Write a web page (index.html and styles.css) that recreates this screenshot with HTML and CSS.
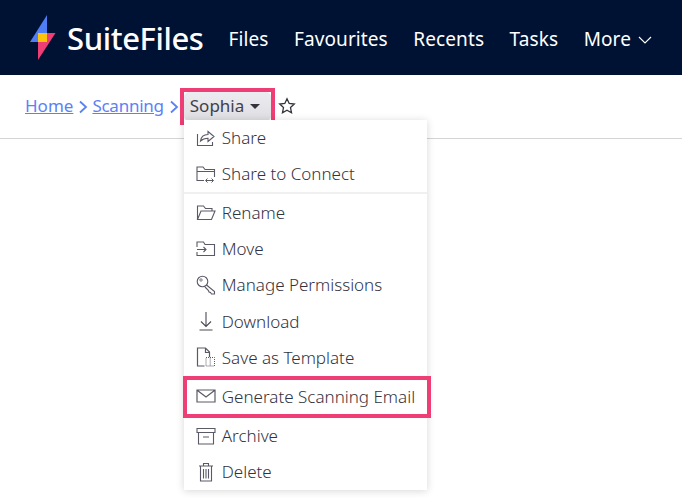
FILE: index.html
```html
<!DOCTYPE html>
<html>
<head>
    <title>SuiteFiles</title>
    <link rel="stylesheet" href="styles.css">
</head>
<body>
    <header class="topbar">
        <a class="brand">
            <svg class="brand-mark" width="26" height="46" viewBox="0 0 26 46">
                <polygon points="17,0 0,27 17,27" fill="#4f7df3"/>
                <polygon points="8,18 25.500,18 8,45" fill="#ef3d75"/>
                <rect x="8" y="18" width="9" height="9" fill="#fcc30b"/>
            </svg>
            <span class="brand-name">SuiteFiles</span>
        </a>
        <nav class="nav">
            <a>Files</a>
            <a>Favourites</a>
            <a>Recents</a>
            <a>Tasks</a>
            <a class="more">More
                <svg width="14" height="8" viewBox="0 0 14 8"><path d="M1 1l6 6 6-6" fill="none" stroke="#fff" stroke-width="1.100"/></svg>
            </a>
        </nav>
    </header>

    <div class="crumbs">
        <a class="crumb">Home</a>
        <svg class="sep" width="10" height="14" viewBox="0 0 10 14"><path d="M2 1.500l6 5.500-6 5.500" fill="none" stroke="#5b82f5" stroke-width="1.800"/></svg>
        <a class="crumb">Scanning</a>
        <svg class="sep" width="10" height="14" viewBox="0 0 10 14"><path d="M2 1.500l6 5.500-6 5.500" fill="none" stroke="#5b82f5" stroke-width="1.800"/></svg>
        <div class="folder">
            <button class="folder-btn">Sophia <span class="caret"></span></button>
            <ul class="menu">
                <li>
                    <svg viewBox="0 0 20 18"><path d="M1.500 5v11.500h15V13M4.500 12c.5-4 3.500-6.500 7.500-6.500V2.500l6 5-6 5V9.300c-3 0-5.500 .7-7.500 2.700z" fill="none" stroke="#5a5a66" stroke-width="1.100"/></svg>
                    Share
                </li>
                <li>
                    <svg viewBox="0 0 20 18"><path d="M8 15.500H1V2h6l2 2.500h9.500V12M18.500 6.500H1" fill="none" stroke="#5a5a66" stroke-width="1.100"/><path d="M10 15.500h7M11.500 13.500l-2 2 2 2M15.500 13.500l2 2-2 2" fill="none" stroke="#5a5a66"/></svg>
                    Share to Connect
                </li>
                <li class="divider"></li>
                <li>
                    <svg viewBox="0 0 20 18"><path d="M1.500 15.500V2h6l2 2.500h6.500V7M1.500 15.500L5 7h14l-3.500 8.500z" fill="none" stroke="#5a5a66" stroke-width="1.100"/></svg>
                    Rename
                </li>
                <li>
                    <svg viewBox="0 0 20 18"><path d="M1 7V2h6.500l1.500 2.500h9.500v11H1V12" fill="none" stroke="#5a5a66" stroke-width="1.100"/><path d="M1 9.500h9M7.500 7l2.500 2.500L7.500 12" fill="none" stroke="#5a5a66" stroke-width="1.100"/></svg>
                    Move
                </li>
                <li>
                    <svg viewBox="0 0 20 20"><circle cx="6.500" cy="6.500" r="5.300" fill="none" stroke="#5a5a66" stroke-width="1.100"/><circle cx="5" cy="5" r="1.200" fill="none" stroke="#5a5a66" stroke-width=".8"/><path d="M10.500 10l8 6.500v2.500h-3l-1-1.500-1.500-.5-.5-1.500L9 12" fill="none" stroke="#5a5a66" stroke-width="1.100"/></svg>
                    Manage Permissions
                </li>
                <li>
                    <svg viewBox="0 0 20 20"><path d="M10 1v14M5 10.500L10 15.500l5-5M3.500 19h13" fill="none" stroke="#4a4a56" stroke-width="1.100"/></svg>
                    Download
                </li>
                <li>
                    <svg viewBox="0 0 20 20"><path d="M8.500 19H1.500V1h8l4 4v5M9.500 1v4.500h4" fill="none" stroke="#5a5a66" stroke-width="1.200"/><path d="M10 10.500h8.500V19H10zM14.200 10.500V19" fill="none" stroke="#5a5a66" stroke-dasharray="1 1"/></svg>
                    Save as Template
                </li>
                <li class="marked">
                    <svg viewBox="0 0 20 18"><path d="M1 3h18v12H1zM1.500 3.500L10 10l8.500-6.500" fill="none" stroke="#5a5a66" stroke-width="1.200"/></svg>
                    Generate Scanning Email
                </li>
                <li>
                    <svg viewBox="0 0 20 18"><path d="M1 1.500h18v4H1zM2.500 5.500v11.500h15V5.500M7 10h6" fill="none" stroke="#5a5a66" stroke-width="1.100"/></svg>
                    Archive
                </li>
                <li>
                    <svg viewBox="0 0 20 20"><path d="M3 4h14M7.500 4V1.500h5V4M4.500 4v15h11V4M7.500 7v9.500M10 7v9.500M12.500 7v9.500" fill="none" stroke="#5a5a66" stroke-width="1.100"/></svg>
                    Delete
                </li>
            </ul>
        </div>
        <svg class="star" width="18" height="18" viewBox="0 0 18 18"><path d="M9 1.800l2.200 4.700 5.100 .6-3.800 3.500 1 5.100L9 13.200l-4.500 2.500 1-5.100L1.700 7.100l5.100-.6z" fill="none" stroke="#33333d" stroke-width="1.300"/></svg>
    </div>
</body>
</html>
```

FILE: styles.css
```css
:root {
    --navy: #001233;
    --pink: #ef3d75;
    --link: #5b82f5;
    --text: #40404c;
}

html, body {
    height: 100%;
}

body {
    margin: 0;
    min-height: 498px;
    font-family: "Noto Sans", "Open Sans", sans-serif;
    color: var(--text);
    background: #fff;
}

.topbar {
    display: flex;
    align-items: center;
    height: 75px;
    padding-left: 30px;
    background: var(--navy);
    color: #fff;
}

.brand {
    display: flex;
    align-items: center;
    gap: 11px;
}

.brand-name {
    font-size: 31px;
    font-weight: 500;
    letter-spacing: -0.4px;
}

.nav {
    display: flex;
    gap: 25.5px;
    margin-left: 25px;
    padding-top: 2px;
    font-size: 19px;
    letter-spacing: 0.1px;
}

.more svg {
    margin-left: 2px;
    vertical-align: 2px;
}

.crumbs {
    display: flex;
    align-items: center;
    height: 63px;
    padding-left: 25px;
    border-bottom: 1px solid #d4d4d4;
    font-size: 17px;
}

.crumb {
    margin-top: -2px;
    color: var(--link);
    text-decoration: underline;
}

.crumb:nth-of-type(2) {
    letter-spacing: -0.25px;
}

.sep {
    margin: 0 4px 0 5px;
}

.folder {
    position: relative;
    z-index: 2;
    margin-left: -3px;
    border: 4px solid var(--pink);
}

.folder-btn {
    display: block;
    width: 87px;
    height: 29px;
    padding: 0 0 2px 6px;
    border: none;
    border-radius: 5px;
    background: linear-gradient(#ececf0, #dedee3);
    color: var(--text);
    font: inherit;
    text-align: left;
}

.caret {
    display: inline-block;
    margin-left: 1px;
    vertical-align: 3px;
    border-top: 5px solid #33333d;
    border-left: 5px solid transparent;
    border-right: 5px solid transparent;
}

.star {
    margin-left: 3px;
    margin-bottom: 1px;
}

.menu {
    position: absolute;
    top: 28px;
    left: 0;
    width: 243px;
    margin: 0;
    padding: 0;
    list-style: none;
    background: #fff;
    box-shadow: 0 1px 8px rgba(0, 0, 0, 0.16);
    color: #33333f;
    font-size: 17px;
    font-weight: 300;
}

.menu li {
    box-sizing: border-box;
    display: flex;
    align-items: center;
    gap: 6px;
    height: 36.2px;
    padding: 0 0 1px 12px;
}

.menu svg {
    flex: none;
    width: 20px;
    height: 20px;
}

.menu .divider {
    height: 2px;
    padding: 0;
    margin-bottom: 0.6px;
    background: #f0f0f0;
}

.menu .marked {
    height: 34px;
    margin: 4px 0 4px 3px;
    padding-left: 9px;
    outline: 4px solid var(--pink);
}
```
